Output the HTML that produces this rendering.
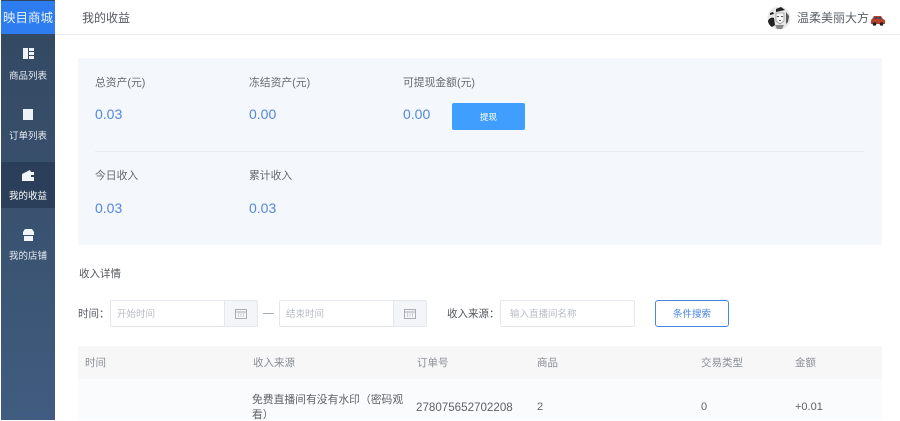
<!DOCTYPE html>
<html lang="zh">
<head>
<meta charset="utf-8">
<style>
html,body{margin:0;padding:0;background:#fff}
body{width:900px;height:420px;overflow:hidden;position:relative;font-family:"Liberation Sans","Noto Sans CJK SC",sans-serif;color:#606266}
.a{position:absolute;white-space:nowrap;line-height:1}
#side{position:absolute;left:1px;top:0;width:54px;height:420px;background:linear-gradient(#33475f,#405c80)}
#logo{position:absolute;left:1px;top:1px;width:54px;height:33px;background:#2e7df0;color:#e8f1ff;font-size:12.500px;line-height:35px;text-align:center;white-space:nowrap;overflow:hidden}
#act{position:absolute;left:1px;top:162px;width:54px;height:46px;background:#2b3f5a}
.nav{position:absolute;left:1px;width:54px;text-align:center;color:#e6ebf1;font-size:9.500px;line-height:1;white-space:nowrap}
.lab{font-size:10.800px;color:#666a70}
.val{font-size:14px;color:#5288e0}
.box{position:absolute;box-sizing:border-box;border:1px solid #e4e7ed;border-radius:2px;background:#fff;height:27px;top:300px}
.ph{font-size:9.500px;color:#b8bcc4}
.cal{position:absolute;box-sizing:border-box;top:300px;height:27px;width:34px;background:#f3f5f8;border:1px solid #e4e7ed;border-radius:0 2px 2px 0}
.th{font-size:10.500px;color:#8a8e96}
.td{font-size:10.800px;color:#606266}
</style>
</head>
<body>
<div id="side"></div>
<div id="logo">映目商城</div>
<div id="act"></div>

<svg class="a" style="left:23px;top:48px" width="11" height="11" viewBox="0 0 11 11"><path d="M0 0h5v11H0zM6 0h5v3H6zM6 4h5v3H6zM6 8h5v3H6z" fill="#eef2f6"/></svg>
<div class="nav" style="top:72px">商品列表</div>
<svg class="a" style="left:23px;top:109px" width="10" height="11" viewBox="0 0 10 11"><path d="M0 0h10v11H0z" fill="#eef2f6"/></svg>
<div class="nav" style="top:132px">订单列表</div>
<svg class="a" style="left:22px;top:170px" width="12" height="11" viewBox="0 0 12 11"><path d="M0 4L8 0l1 2h3v9H0z" fill="#f2f5f8"/><path d="M9 5h3v2H9z" fill="#2b3f5a"/></svg>
<div class="nav" style="top:192px;color:#fff">我的收益</div>
<svg class="a" style="left:23px;top:229px" width="11" height="12" viewBox="0 0 11 12"><path d="M2 0h7l2 3v3H0V3zM1 7h9v5H1z" fill="#f2f5f8"/></svg>
<div class="nav" style="top:252px">我的店铺</div>

<div class="a" style="left:55px;top:34px;width:845px;height:1px;background:#e9ebef"></div>
<div class="a" style="left:82px;top:12px;font-size:12px;color:#55585e">我的收益</div>

<svg class="a" style="left:767px;top:6px" width="24" height="24" viewBox="0 0 24 24">
<circle cx="12" cy="12" r="11.500" fill="#e8e8e8"/>
<path d="M1 15c1-3 4-4 6-3l1 7-3 2c-2-1-4-4-4-6zM9 3l5-2 4 3-9 2zM3 7l3-1 1 2-4 1z" fill="#222"/>
<path d="M9 7h8v8l-4 3-4-3z" fill="#f8f8f8" stroke="#777" stroke-width=".6"/>
<path d="M10 10h2v1h-2zM14 10h2v1h-2zM12 14h2v1h-2zM19 6l3 4-1 6-2 2z" fill="#555"/>
<path d="M8 19l9 0-2 4h-5z" fill="#888"/>
</svg>
<div class="a" style="left:797px;top:12px;font-size:12px;color:#5a6068">温柔美丽大方</div>
<svg class="a" style="left:870px;top:15px" width="16" height="11" viewBox="0 0 16 11"><path d="M4 1h7l2 3 2 1v4H1V5l1-1z" fill="#b5412f"/><path d="M5 2h2.500v2H4zM8.500 2H10.500l1.500 2H8.500z" fill="#3b4a58"/><circle cx="4.500" cy="9" r="1.800" fill="#222"/><circle cx="11.500" cy="9" r="1.800" fill="#222"/></svg>

<div class="a" style="left:78px;top:58px;width:804px;height:187px;background:#f4f7fb"></div>
<div class="a lab" style="left:95px;top:78px">总资产(元)</div>
<div class="a lab" style="left:249px;top:78px">冻结资产(元)</div>
<div class="a lab" style="left:403px;top:78px">可提现金额(元)</div>
<div class="a val" style="left:95px;top:107px">0.03</div>
<div class="a val" style="left:249px;top:107px">0.00</div>
<div class="a val" style="left:403px;top:107px">0.00</div>
<div class="a" style="left:452px;top:103px;width:73px;height:27px;background:#409eff;border-radius:2px;color:#fff;font-size:8.500px;line-height:28px;text-align:center">提现</div>
<div class="a" style="left:95px;top:151px;width:769px;height:1px;background:#e9edf2"></div>
<div class="a lab" style="left:95px;top:171px">今日收入</div>
<div class="a lab" style="left:249px;top:171px">累计收入</div>
<div class="a val" style="left:95px;top:201px">0.03</div>
<div class="a val" style="left:249px;top:201px">0.03</div>

<div class="a" style="left:79px;top:269px;font-size:10.500px;color:#55585e">收入详情</div>

<div class="a" style="left:78px;top:309px;font-size:10.500px;color:#55585e">时间：</div>
<div class="box" style="left:110px;width:115px"></div>
<div class="a ph" style="left:117px;top:310px">开始时间</div>
<div class="cal" style="left:224px"></div>
<svg class="a" style="left:235px;top:308px" width="12" height="11" viewBox="0 0 12 11"><path d="M.5 1.500h11v9H.5zM.5 4h11M3 6h1M5.500 6h1M8 6h1M3 8h1M5.500 8h1M8 8h1" fill="none" stroke="#a9adb5"/></svg>
<div class="a" style="left:263px;top:313px;width:11px;height:1px;background:#a9adb5"></div>
<div class="box" style="left:279px;width:115px"></div>
<div class="a ph" style="left:286px;top:310px">结束时间</div>
<div class="cal" style="left:393px"></div>
<svg class="a" style="left:404px;top:308px" width="12" height="11" viewBox="0 0 12 11"><path d="M.5 1.500h11v9H.5zM.5 4h11M3 6h1M5.500 6h1M8 6h1M3 8h1M5.500 8h1M8 8h1" fill="none" stroke="#a9adb5"/></svg>
<div class="a" style="left:447px;top:309px;font-size:10.500px;color:#55585e">收入来源：</div>
<div class="box" style="left:500px;width:135px"></div>
<div class="a ph" style="left:510px;top:310px">输入直播间名称</div>
<div class="a" style="left:655px;top:300px;width:74px;height:27px;box-sizing:border-box;border:1px solid #4a86e0;border-radius:3px;color:#4a86e0;font-size:9.500px;line-height:27px;text-align:center">条件搜索</div>

<div class="a" style="left:78px;top:346px;width:804px;height:33px;background:#f7f7f7"></div>
<div class="a" style="left:78px;top:379px;width:804px;height:41px;background:#fafbfd"></div>
<div class="a th" style="left:85px;top:358px">时间</div>
<div class="a th" style="left:253px;top:358px">收入来源</div>
<div class="a th" style="left:417px;top:358px">订单号</div>
<div class="a th" style="left:537px;top:358px">商品</div>
<div class="a th" style="left:701px;top:358px">交易类型</div>
<div class="a th" style="left:795px;top:358px">金额</div>
<div class="a td" style="left:252px;top:395px">免费直播间有没有水印（密码观</div>
<div class="a td" style="left:252px;top:410px">看）</div>
<div class="a td" style="left:416px;top:402px;font-size:11.600px">278075652702208</div>
<div class="a td" style="left:537px;top:402px;font-size:11px">2</div>
<div class="a td" style="left:701px;top:402px;font-size:11px">0</div>
<div class="a td" style="left:795px;top:402px;font-size:11px">+0.01</div>
</body>
</html>
